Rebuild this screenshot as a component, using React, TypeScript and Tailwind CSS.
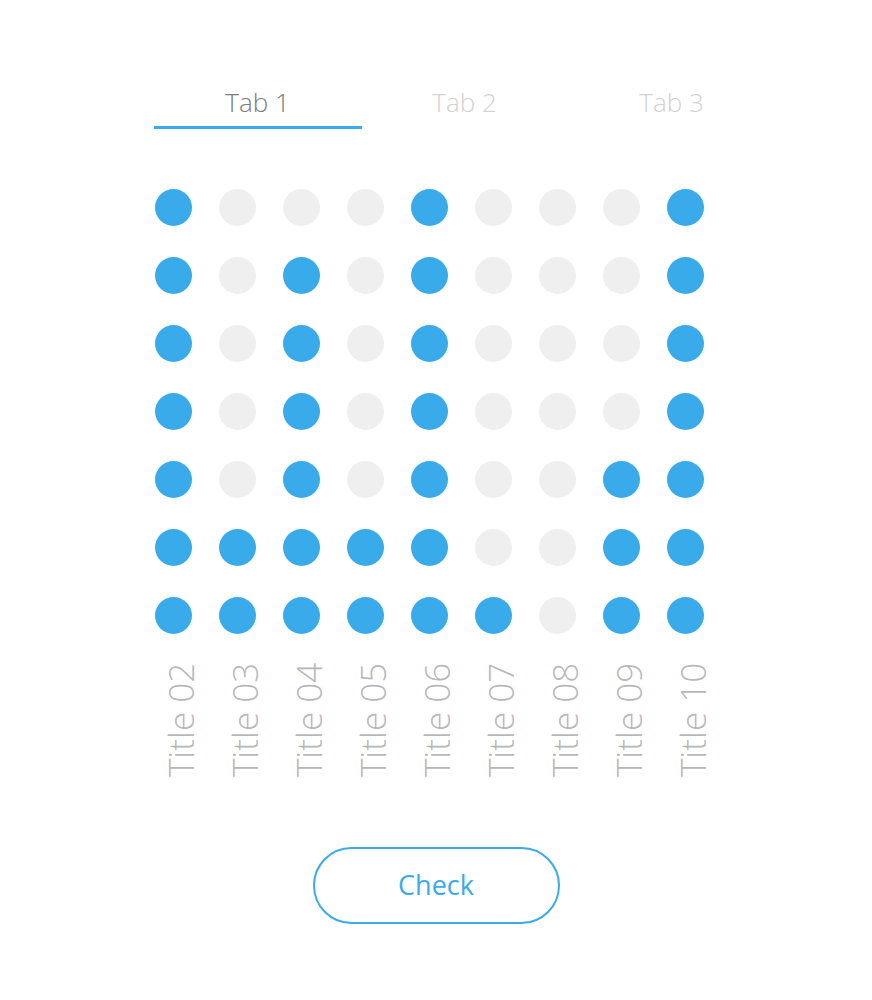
import React, { useState } from "react";

const BLUE = "#3aabea";

// 1 = filled (blue), 0 = empty (grey); 7 rows x 9 columns
const MATRIX: number[][] = [
  [1, 0, 0, 0, 1, 0, 0, 0, 1],
  [1, 0, 1, 0, 1, 0, 0, 0, 1],
  [1, 0, 1, 0, 1, 0, 0, 0, 1],
  [1, 0, 1, 0, 1, 0, 0, 0, 1],
  [1, 0, 1, 0, 1, 0, 0, 1, 1],
  [1, 1, 1, 1, 1, 0, 0, 1, 1],
  [1, 1, 1, 1, 1, 1, 0, 1, 1],
];

const LABELS = ["Title 02", "Title 03", "Title 04", "Title 05", "Title 06", "Title 07", "Title 08", "Title 09", "Title 10"];
const TABS = ["Tab 1", "Tab 2", "Tab 3"];

export default function App() {
  const [active, setActive] = useState(0);

  return (
    <div
      className="min-h-[1000px] w-[872px] bg-white pl-[154px] pt-[84px]"
      style={{ fontFamily: '"Open Sans", "Liberation Sans", sans-serif' }}
    >
      {/* tab bar */}
      <div className="flex">
        {TABS.map((t, i) => (
          <button
            key={t}
            onClick={() => setActive(i)}
            className="flex w-[207px] flex-col items-center"
          >
            <span
              className={
                "text-[26px] font-light leading-[36px] " +
                (i === active ? "text-[#7c7c7c]" : "text-[#d2d2d2]")
              }
            >
              {t}
            </span>
            <span
              className={
                "mt-[6px] h-[3px] w-[208px] " + (i === active ? "bg-[#3aabea]" : "bg-transparent")
              }
            />
          </button>
        ))}
      </div>

      {/* dot matrix */}
      <div className="ml-[1px] mt-[60px] grid grid-cols-[repeat(9,37px)] gap-x-[27px] gap-y-[31px]">
        {MATRIX.flatMap((row, r) =>
          row.map((v, c) => (
            <div
              key={`${r}-${c}`}
              className={"h-[37px] w-[37px] rounded-full " + (v ? "bg-[#3aabea]" : "bg-[#efefef]")}
            />
          ))
        )}
      </div>

      {/* column labels */}
      <div className="ml-[1px] mt-[27px] grid grid-cols-[repeat(9,37px)] gap-x-[27px]">
        {LABELS.map((l) => (
          <div key={l} className="flex h-[116px] justify-center">
            <span
              className="translate-x-[7px] rotate-180 whitespace-nowrap text-[35px] font-light leading-[37px] text-[#b8b8b8] [writing-mode:vertical-rl]"
            >
              {l}
            </span>
          </div>
        ))}
      </div>

      {/* action */}
      <div className="mt-[70px] flex w-[564px] justify-center">
        <button
          className="flex h-[77px] w-[247px] items-center justify-center rounded-full border-2 border-[#3aabea] text-[27px] text-[#3aabea]"
          style={{ color: BLUE }}
        >
          Check
        </button>
      </div>
    </div>
  );
}
